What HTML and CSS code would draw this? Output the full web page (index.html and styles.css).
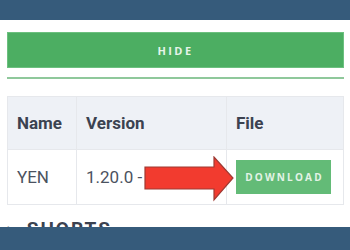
FILE: index.html
```html
<!DOCTYPE html>
<html>
<head>
<meta charset="utf-8">
<link rel="stylesheet" href="styles.css">
</head>
<body>
<div class="topbar"></div>
<main class="content">
  <button class="hide-btn">HIDE</button>
  <div class="divider"></div>
  <div class="table-wrap">
    <table class="files">
      <thead>
        <tr><th class="c-name">Name</th><th class="c-ver">Version</th><th class="c-file">File</th></tr>
      </thead>
      <tbody>
        <tr>
          <td>YEN</td>
          <td>1.20.0 -</td>
          <td><button class="dl-btn">DOWNLOAD</button></td>
        </tr>
      </tbody>
    </table>
    <svg class="arrow" width="92" height="46" viewBox="0 0 92 46">
      <path d="M1 11 H70 V1 L89 22 L70 44 V33 H1 Z" fill="#f23b2f" stroke="#9e3a33" stroke-width="1.2" stroke-linejoin="miter"/>
    </svg>
  </div>
  <h2 class="shorts"><span class="tri">▶</span> SHORTS</h2>
</main>
<div class="bottombar"></div>
</body>
</html>
```
FILE: styles.css
```css
html, body { margin: 0; padding: 0; background: #fff; }
body { font-family: Roboto, "Noto Sans", sans-serif; width: 350px; height: 250px; overflow: hidden; }
.topbar { height: 20px; background: #365b7b; }
.content { padding: 0 6px 0 7px; }
.hide-btn {
  display: block; width: 337px; height: 36px; margin: 12px 0 0 0; padding: 0;
  background: #4cae62; border: 1px solid #6cc07f; color: #e6f4e9;
  font-family: "Open Sans", Roboto, sans-serif; font-weight: 700; font-size: 11px; letter-spacing: 2.4px;
}
.divider { width: 337px; height: 2px; margin-top: 9px; background: #8fc89b; }
.table-wrap { position: relative; margin-top: 17px; width: 337px; }
.files { border-collapse: collapse; width: 337px; table-layout: fixed; }
.files th, .files td { border: 1px solid #e6e8ec; text-align: left; padding: 0 0 0 9px; }
.files th { background: #eef1f6; height: 52px; font-weight: 700; font-size: 17px; color: #3b4250; }
.files td { height: 54px; font-size: 17px; color: #4b5260; font-weight: 400; }
.c-name { width: 59px; }
.c-ver { width: 140px; }
.dl-btn {
  display: block; width: 95px; height: 34px; padding: 0 0 0 2px; margin: 0;
  background: #63bb77; border: none; color: #e3f3e6;
  font-family: "Open Sans", Roboto, sans-serif; font-weight: 700; font-size: 10px; letter-spacing: 2.2px;
}
.arrow { position: absolute; left: 137px; top: 60px; }
.shorts { margin: 12px 0 0 1px; font-size: 19px; line-height: 24px; font-weight: 700; color: #3b4250; letter-spacing: 2px; }
.tri { font-size: 13px; }
.bottombar { position: fixed; left: 0; right: 0; bottom: 0; height: 23px; background: #365b7b; }
```
